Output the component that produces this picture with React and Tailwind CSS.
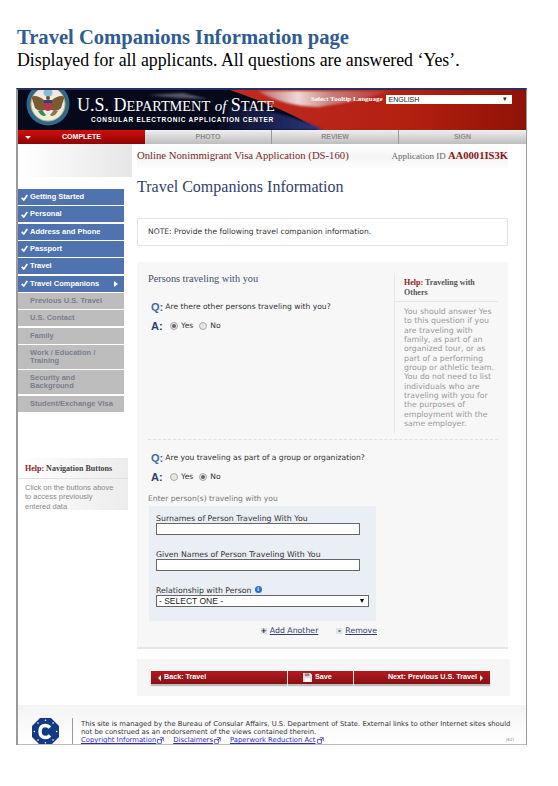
import React from "react";

const serif = "font-['Liberation_Serif',serif]";
const sans = "font-['Liberation_Sans',sans-serif]";
const verdana = "font-['DejaVu_Sans',sans-serif]";

const Seal = () => (
  <svg width="44" height="44" viewBox="0 0 44 44" className="shrink-0">
    <circle cx="22" cy="22" r="21.5" fill="#2f6a8c" />
    <circle cx="22" cy="22" r="17" fill="#eeece2" stroke="#c9b56a" strokeWidth="1" />
    <circle cx="22" cy="10.5" r="4.5" fill="#8cbbd8" />
    <path d="M5.5 15 Q10 12 18 18 L19 28 Q12 30 9 26 Z" fill="#7a5a2e" />
    <path d="M38.5 15 Q34 12 26 18 L25 28 Q32 30 35 26 Z" fill="#7a5a2e" />
    <circle cx="22" cy="16" r="2" fill="#6b4f28" />
    <path d="M18 18 H26 V27 Q22 31 18 27 Z" fill="#b5354a" />
    <path d="M18 18 H26 V21 H18 Z" fill="#2c3f80" />
    <path d="M12 29 Q16 36 20 33 L16 28 Z" fill="#3d8a4a" />
    <path d="M32 29 Q28 36 24 33 L28 28 Z" fill="#8a7a4a" />
  </svg>
);

const Flag = () => (
  <svg className="absolute inset-0" width="509" height="40" viewBox="0 0 509 40">
    <defs>
      <linearGradient id="redBand" x1="0" y1="0" x2="1" y2="0">
        <stop offset="0" stopColor="#c02a20" />
        <stop offset="0.6" stopColor="#b3200f" />
        <stop offset="1" stopColor="#8f1206" />
      </linearGradient>
      <linearGradient id="paleBand" x1="0" y1="0" x2="1" y2="0">
        <stop offset="0" stopColor="#b8686c" />
        <stop offset="0.3" stopColor="#eed8d4" />
        <stop offset="0.55" stopColor="#c8807c" />
        <stop offset="1" stopColor="#b3322a" />
      </linearGradient>
      <linearGradient id="blueBand" x1="0" y1="0" x2="1" y2="0">
        <stop offset="0" stopColor="#0a0d24" />
        <stop offset="1" stopColor="#2a3a80" />
      </linearGradient>
      <filter id="soft" x="-10%" y="-30%" width="120%" height="160%">
        <feGaussianBlur stdDeviation="1.2" />
      </filter>
    </defs>
    <path d="M212 0 H509 V40 H300 Q275 22 212 0 Z" fill="url(#redBand)" />
    <path d="M240 1 H372 Q340 12 300 17 Q265 16 240 1 Z" fill="url(#paleBand)" filter="url(#soft)" />
    <path d="M210 14 Q270 22 306 40 H200 Z" fill="url(#blueBand)" filter="url(#soft)" />
    <path d="M130 5 L165 3 L190 9 L160 8 Z" fill="#8a8f9e" opacity="0.6" filter="url(#soft)" />
  </svg>
);

const Check = () => (
  <svg width="7" height="7" viewBox="0 0 10 10" className="shrink-0">
    <path d="M1 5.5 L4 8.5 L9 1.5" fill="none" stroke="#fff" strokeWidth="2.4" />
  </svg>
);

const done = ["Getting Started", "Personal", "Address and Phone", "Passport", "Travel"];
const todo = [
  ["Previous U.S. Travel"],
  ["U.S. Contact"],
  ["Family"],
  ["Work / Education /", "Training"],
  ["Security and", "Background"],
  ["Student/Exchange Visa"],
];

const Sidebar = () => (
  <div className={`w-[106px] flex flex-col gap-[1.33px] text-[7.5px] leading-[8px] font-bold ${sans}`}>
    {done.map((t) => (
      <div key={t} className="h-[16px] bg-[#4f73ae] text-white flex items-center gap-[2px] pl-[3px]">
        <Check /> {t}
      </div>
    ))}
    <div className="h-[16px] bg-[#4f73ae] text-white flex items-center gap-[2px] pl-[3px]">
      <Check /> Travel Companions
      <span className="ml-auto mr-[6px] w-0 h-0 border-y-[3px] border-y-transparent border-l-[4px] border-l-white" />
    </div>
    {todo.map((t) => (
      <div key={t[0]} className={`${t.length > 1 ? "h-[24px]" : "h-[16px]"} bg-[#bdbdbd] text-[#7a7f8c] flex flex-col justify-center pl-[12px]`}>
        {t.map((line) => <span key={line}>{line}</span>)}
      </div>
    ))}
  </div>
);

const Radio = ({ on, label }) => (
  <label className="flex items-center gap-[3px] mr-[6px]">
    <span className="w-[8px] h-[8px] rounded-full border border-[#aaa] bg-[#e6e6e6] flex items-center justify-center">
      {on && <span className="w-[4px] h-[4px] rounded-full bg-[#666]" />}
    </span>
    {label}
  </label>
);

const Question = ({ text, yes }) => (
  <div className={`text-[7.6px] text-[#333] ${verdana}`}>
    <div className="flex items-center gap-[2px] h-[12px]">
      <span className={`text-[11px] font-bold text-[#3f66a8] ${sans}`}>Q:</span> {text}
    </div>
    <div className="flex items-center mt-[7px] h-[12px]">
      <span className={`text-[11px] font-bold text-[#2c3f74] w-[19px] ${sans}`}>A:</span>
      <Radio on={yes} label="Yes" />
      <Radio on={!yes} label="No" />
    </div>
  </div>
);

const Field = ({ label }) => (
  <div className="mb-[15px]">
    <div className="text-[7.8px] leading-[9px] text-[#333]">{label}</div>
    <input className="block w-[204px] h-[12px] bg-white border border-[#666]" />
  </div>
);

const ExtLink = ({ children }) => (
  <a className="underline text-[#2a2ad0] inline-flex items-center gap-[1px] mr-[9px]">
    {children}
    <svg width="7" height="7" viewBox="0 0 10 10" fill="none" stroke="#2a2ad0" strokeWidth="1">
      <rect x="1" y="3.5" width="5.5" height="5.5" />
      <path d="M4 1 H9 V6 M5 5 L9 1" />
    </svg>
  </a>
);

const CLogo = () => (
  <svg width="27" height="27" viewBox="0 0 27 27" className="shrink-0 -mb-[1px]">
    <path d="M8 0 H19 L27 8 V19 L19 27 H8 L0 19 V8 Z" fill="#123a86" />
    <circle cx="13.5" cy="2.2" r="0.8" fill="#fff" />
    <circle cx="6" cy="5" r="0.8" fill="#fff" />
    <circle cx="21" cy="5" r="0.8" fill="#fff" />
    <circle cx="2.3" cy="13.5" r="0.8" fill="#fff" />
    <circle cx="24.7" cy="13.5" r="0.8" fill="#fff" />
    <circle cx="6" cy="22" r="0.8" fill="#fff" />
    <circle cx="21" cy="22" r="0.8" fill="#fff" />
    <circle cx="13.5" cy="24.8" r="0.8" fill="#fff" />
    <path d="M18 9.5 Q16 7.5 13.5 7.5 Q8 7.5 8 13.5 Q8 19.5 13.5 19.5 Q16 19.5 18 17.5" fill="none" stroke="#fff" strokeWidth="3.4" />
  </svg>
);

const redButton = "h-[13px] bg-gradient-to-b from-[#b31b20] to-[#8a0f12] flex items-center shadow-[0_2px_1px_#bbb]";

export default function App() {
  return (
    <div className="w-[558px] h-[786px] bg-white overflow-hidden">
      <div className="pl-[17px] pt-[25px]">
        <h1 className={`text-[20.6px] leading-[24px] font-bold text-[#2f5c94] ${serif}`}>Travel Companions Information page</h1>
        <p className={`text-[17.8px] leading-[22px] text-black ${serif}`}>Displayed for all applicants. All questions are answered ‘Yes’.</p>
      </div>

      <div className="ml-[16px] mt-[17px] w-[511px] h-[657px] border-l-2 border-r border-[#9a9a9a] border-t-2 border-t-[#27305e] flex flex-col">
        {/* banner */}
        <div className="h-[40px] relative bg-[#05091a] overflow-hidden shrink-0">
          <Flag />
          <div className="relative flex items-start pl-[8px] -mt-[8px]">
            <Seal />
            <div className="ml-[7px] mt-[14px] text-white">
              <div className={`text-[18px] leading-[19px] whitespace-nowrap ${serif}`}>U.S. D<span className="text-[14.3px]">EPARTMENT</span> <span className="italic text-[15px]">of</span> S<span className="text-[14.3px]">TATE</span></div>
              <div className={`text-[6.5px] leading-[8px] font-bold tracking-[0.75px] whitespace-nowrap pl-[14px] ${sans}`}>CONSULAR ELECTRONIC APPLICATION CENTER</div>
            </div>
            <div className="absolute left-[293px] top-[12px] flex items-center gap-[3px]">
              <span className={`text-[7px] text-white font-bold whitespace-nowrap ${serif}`}>Select Tooltip Language</span>
              <div className={`w-[126px] h-[9px] bg-white text-[#222] text-[7px] leading-[9px] pl-[3px] flex justify-between pr-[4px] ${sans}`}>
                ENGLISH <span className="text-[6px]">▼</span>
              </div>
            </div>
          </div>
        </div>

        {/* tabs */}
        <div className={`h-[14px] shrink-0 grid grid-cols-4 text-[7px] font-bold text-center leading-[14px] ${sans}`}>
          <div className="relative bg-gradient-to-b from-[#d40d0d] to-[#8c0505] text-white">
            <span className="absolute left-[7px] top-[6px] w-0 h-0 border-x-[3px] border-x-transparent border-t-[3px] border-t-white" />
            COMPLETE
          </div>
          <div className="bg-gradient-to-b from-[#f0f0f0] to-[#bdbdbd] text-[#8d8d8d] border-r border-[#999]">PHOTO</div>
          <div className="bg-gradient-to-b from-[#f0f0f0] to-[#bdbdbd] text-[#8d8d8d] border-r border-[#999]">REVIEW</div>
          <div className="bg-gradient-to-b from-[#f0f0f0] to-[#bdbdbd] text-[#8d8d8d]">SIGN</div>
        </div>

        <div className="flex h-[561px] shrink-0">
          {/* left column */}
          <div className="w-[119px] shrink-0 flex flex-col">
            <div className="h-[33px] w-[114px] bg-gradient-to-r from-white to-[#e6e6e6] mb-[12px]" />
            <Sidebar />
            <div className="mt-[46px] w-[110px] h-[52px] bg-gradient-to-r from-white to-[#ececec] pt-[5px]">
              <div className={`text-[8px] font-bold text-[#444] pl-[7px] pb-[3px] border-b border-[#e2e2e2] ${serif}`}>
                <span className="text-[#8a1c1c]">Help:</span> Navigation Buttons
              </div>
              <div className={`text-[7.5px] leading-[9.5px] text-[#8a8a8a] pl-[7px] pr-[12px] pt-[4px] ${sans}`}>
                Click on the buttons above to access previously entered data
              </div>
            </div>
          </div>

          {/* main column */}
          <div className="flex-1 flex flex-col pr-[18px]">
            <div className="flex items-baseline justify-between h-[26px] pt-[3px] bg-gradient-to-b from-white via-[#f4f4f4] to-white">
              <span className={`text-[10.7px] text-[#7a2a2a] ${serif}`}>Online Nonimmigrant Visa Application (DS-160)</span>
              <span className={`text-[9px] text-[#666] ${serif}`}>Application ID <b className="text-[10.6px] text-[#8c1414]">AA0001IS3K</b></span>
            </div>
            <h2 className={`text-[16px] leading-[22px] text-[#33406e] mt-[6px] ${serif}`}>Travel Companions Information</h2>
            <div className={`mt-[20px] h-[28px] border border-[#e4e4e4] flex items-center pl-[10px] text-[7.6px] text-[#333] ${verdana}`}>
              NOTE: Provide the following travel companion information.
            </div>

            {/* form panel */}
            <div className="mt-[16px] h-[387px] bg-[#f7f7f7] border-b-2 border-[#e6e6e6] pt-[11px] pl-[11px] pr-[10px] shrink-0">
              <div className="flex h-[160px]">
                <div className="flex-1">
                  <div className={`text-[10.3px] leading-[12px] text-[#444c70] ${serif}`}>Persons traveling with you</div>
                  <div className="pl-[3px] mt-[16px]"><Question text="Are there other persons traveling with you?" yes /></div>
                </div>
                <div className="w-[104px] border-l border-[#e6e6e6] pt-[5px]">
                  <div className={`pl-[9px] pb-[4px] border-b border-[#e6e6e6] text-[8px] leading-[9.5px] font-bold text-[#555] ${serif}`}>
                    <span className="text-[#8a1c1c]">Help:</span> Traveling with Others
                  </div>
                  <div className={`pl-[9px] pt-[5px] text-[7.8px] leading-[9.33px] text-[#9a9a9a] ${verdana}`}>
                    You should answer Yes to this question if you are traveling with family, as part of an organized tour, or as part of a performing group or athletic team. You do not need to list individuals who are traveling with you for the purposes of employment with the same employer.
                  </div>
                </div>
              </div>
              <div className="border-t border-dashed border-[#e0e0e0] mt-[6px] pt-[12px] pl-[3px]">
                <Question text="Are you traveling as part of a group or organization?" yes={false} />
              </div>
              <div className={`text-[7.6px] text-[#777] mt-[10px] ${verdana}`}>Enter person(s) traveling with you</div>
              <div className={`ml-[1px] mt-[2px] w-[227px] h-[115px] bg-[#e9eff5] pt-[8px] pl-[7px] ${verdana}`}>
                <Field label="Surnames of Person Traveling With You" />
                <Field label="Given Names of Person Traveling With You" />
                <div className="text-[7.8px] leading-[9px] text-[#333] flex items-center gap-[3px]">
                  Relationship with Person
                  <span className="w-[7px] h-[7px] -mt-[3px] rounded-full bg-[#2f6fd0] text-white text-[5px] leading-[7px] text-center font-bold">i</span>
                </div>
                <div className="relative w-[213px]">
                  <select className={`block w-full h-[12px] bg-white border border-[#666] appearance-none text-[8.5px] leading-[10px] pl-[2px] text-[#222] ${sans}`}>
                    <option>- SELECT ONE -</option>
                  </select>
                  <span className="absolute right-[5px] top-[4px] w-0 h-0 border-x-[2.5px] border-x-transparent border-t-[4px] border-t-black" />
                </div>
              </div>
              <div className={`flex justify-end w-[229px] mt-[4px] gap-[18px] text-[7.8px] text-[#33406e] ${verdana}`}>
                <span className="flex items-center gap-[3px]">
                  <span className="w-[6px] h-[6px] bg-[#dde3ea] text-[#223] text-[7px] leading-[6px] font-bold text-center">+</span>
                  <a className="underline">Add Another</a>
                </span>
                <span className="flex items-center gap-[3px]">
                  <span className="w-[6px] h-[6px] bg-[#dde3ea] text-[#223] text-[7px] leading-[6px] font-bold text-center">-</span>
                  <a className="underline">Remove</a>
                </span>
              </div>
            </div>

            {/* nav buttons */}
            <div className={`mt-[10px] -mr-[2px] h-[37px] bg-[#f6f6f6] pl-[14px] pt-[12px] flex gap-[1px] text-[7.2px] font-bold text-white ${sans} shrink-0`}>
              <div className={`w-[136px] pl-[7px] gap-[3px] ${redButton}`}>
                <span className="w-0 h-0 border-y-[3px] border-y-transparent border-r-[3px] border-r-white" /> Back: Travel
              </div>
              <div className={`w-[65px] pl-[15px] gap-[3px] ${redButton}`}>
                <svg width="9" height="9" viewBox="0 0 10 10"><path d="M0 0 H8 L10 2 V10 H0 Z" fill="#ddd" /><rect x="2" y="0.5" width="5" height="3" fill="#888" /><rect x="2" y="6" width="6" height="4" fill="#fff" /></svg>
                Save
              </div>
              <div className={`w-[136px] justify-end pr-[7px] gap-[3px] ${redButton}`}>
                Next: Previous U.S. Travel <span className="w-0 h-0 border-y-[3px] border-y-transparent border-l-[3px] border-l-white" />
              </div>
            </div>
          </div>
        </div>

        {/* footer */}
        <div className={`h-[40px] shrink-0 bg-gradient-to-b from-[#f4f4f4] to-white border-b border-[#bbb] flex items-end overflow-hidden pl-[14px] text-[6.85px] leading-[8px] text-[#333] ${verdana}`}>
          <CLogo />
          <div className="ml-[13px] border-l border-[#999] pl-[8px] pt-[2px] flex-1 pr-[12px]">
            This site is managed by the Bureau of Consular Affairs, U.S. Department of State. External links to other Internet sites should not be construed as an endorsement of the views contained therein.
            <div className="flex"><ExtLink>Copyright Information</ExtLink><ExtLink>Disclaimers</ExtLink><ExtLink>Paperwork Reduction Act</ExtLink><span className="ml-auto text-[4px] text-[#888]">(62)</span></div>
          </div>
        </div>
      </div>
    </div>
  );
}
